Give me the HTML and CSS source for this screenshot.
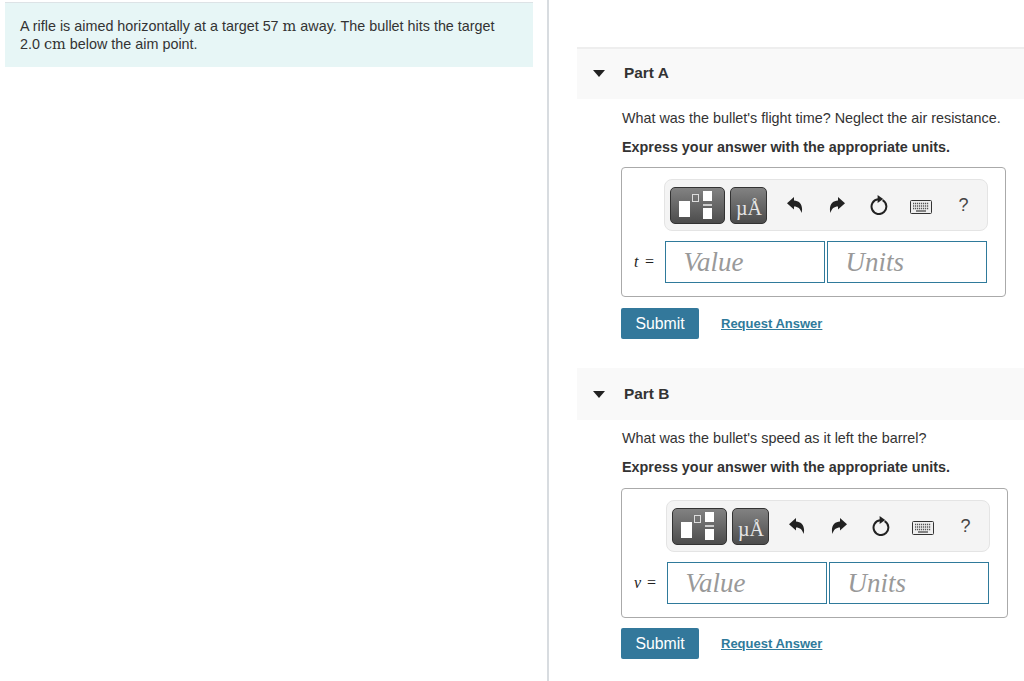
FILE: index.html
```html
<!DOCTYPE html>
<html lang="en">
<head>
    <meta charset="UTF-8">
    <meta name="viewport" content="width=device-width, initial-scale=1.0">
    <title>Projectile Problem</title>
    <link rel="stylesheet" href="styles.css">
</head>
<body>
    <svg class="defs" width="0" height="0">
        <symbol id="icon-undo" viewBox="0 0 16 16">
            <path d="M0 6.2 L7 0 V3.6 C12.5 3.8 16.5 8 14.6 16 C13.4 11.4 11 9.4 7 9.4 V12.6 Z"/>
        </symbol>
        <symbol id="icon-redo" viewBox="0 0 16 16">
            <path d="M16 6.2 L9 0 V3.6 C3.5 3.8 -0.5 8 1.4 16 C2.6 11.4 5 9.4 9 9.4 V12.6 Z"/>
        </symbol>
        <symbol id="icon-reset" viewBox="0 0 20 20">
            <path d="M13.6 5.2 A7.4 7.4 0 1 1 9 4.3" fill="none" stroke="#222" stroke-width="2"/>
            <path d="M8.6 0 L14.2 4 L8.6 8 Z"/>
        </symbol>
        <symbol id="icon-keyboard" viewBox="0 0 22 14">
            <rect x="0.5" y="0.5" width="21" height="13" rx="1" fill="#eee" stroke="#333"/>
            <path d="M3 3.5 H19 M3 6 H19 M3 8.5 H19" stroke="#555" stroke-width="1.4" stroke-dasharray="1.2 0.8"/>
            <path d="M6 11 H16" stroke="#555" stroke-width="1.4"/>
        </symbol>
    </svg>

    <div class="page">
        <div class="left-col">
            <div class="intro">
                A rifle is aimed horizontally at a target 57 <span class="math">m</span> away. The bullet hits the target<br>
                2.0 <span class="math">cm</span> below the aim point.
            </div>
        </div>

        <div class="right-col">
            <div class="part">
                <div class="part-header"><span class="arrow"></span><span class="part-title">Part A</span></div>
                <div class="part-body">
                    <p class="question">What was the bullet's flight time? Neglect the air resistance.</p>
                    <p class="hint">Express your answer with the appropriate units.</p>
                    <div class="answer-box">
                        <div class="toolbar">
                            <button class="tool tool-template">
                                <span class="sq sq-big"></span><span class="sq sq-small"></span>
                                <span class="frac"><span class="sq"></span><span class="bar"></span><span class="sq"></span></span>
                            </button>
                            <button class="tool tool-units">µÅ</button>
                            <span class="tool-icon"><svg width="16" height="16"><use href="#icon-undo"/></svg></span>
                            <span class="tool-icon"><svg width="16" height="16"><use href="#icon-redo"/></svg></span>
                            <span class="tool-icon"><svg width="20" height="20"><use href="#icon-reset"/></svg></span>
                            <span class="tool-icon"><svg class="icon-kb" width="22" height="14"><use href="#icon-keyboard"/></svg></span>
                            <span class="tool-icon help">?</span>
                        </div>
                        <div class="var-label"><i>t</i> =</div>
                        <div class="inputs">
                            <input type="text" placeholder="Value">
                            <input type="text" placeholder="Units">
                        </div>
                    </div>
                    <div class="actions">
                        <button class="submit">Submit</button>
                        <a class="request" href="#">Request Answer</a>
                    </div>
                </div>
            </div>

            <div class="part">
                <div class="part-header no-line"><span class="arrow"></span><span class="part-title">Part B</span></div>
                <div class="part-body">
                    <p class="question">What was the bullet's speed as it left the barrel?</p>
                    <p class="hint">Express your answer with the appropriate units.</p>
                    <div class="answer-box">
                        <div class="toolbar">
                            <button class="tool tool-template">
                                <span class="sq sq-big"></span><span class="sq sq-small"></span>
                                <span class="frac"><span class="sq"></span><span class="bar"></span><span class="sq"></span></span>
                            </button>
                            <button class="tool tool-units">µÅ</button>
                            <span class="tool-icon"><svg width="16" height="16"><use href="#icon-undo"/></svg></span>
                            <span class="tool-icon"><svg width="16" height="16"><use href="#icon-redo"/></svg></span>
                            <span class="tool-icon"><svg width="20" height="20"><use href="#icon-reset"/></svg></span>
                            <span class="tool-icon"><svg class="icon-kb" width="22" height="14"><use href="#icon-keyboard"/></svg></span>
                            <span class="tool-icon help">?</span>
                        </div>
                        <div class="var-label"><i>v</i> =</div>
                        <div class="inputs">
                            <input type="text" placeholder="Value">
                            <input type="text" placeholder="Units">
                        </div>
                    </div>
                    <div class="actions actions-last">
                        <button class="submit">Submit</button>
                        <a class="request" href="#">Request Answer</a>
                    </div>
                </div>
            </div>
        </div>
    </div>
</body>
</html>
```

FILE: styles.css
```css
html, body {
    margin: 0;
    padding: 0;
    height: 100%;
    overflow: hidden;
    background: #fff;
}
body {
    font-family: "Liberation Sans", Arial, sans-serif;
    font-size: 14.37px;
    color: #333;
}
.defs {
    position: absolute;
}
.page {
    display: flex;
    height: 681px;
}
.left-col {
    width: 549px;
    flex: none;
    box-sizing: border-box;
    padding: 2px 14px 0 5px;
    border-right: 2px solid #d8dce0;
}
.intro {
    background: #e7f6f6;
    border-top: 1px solid #dde3e6;
    padding: 14px 15px 14px;
    line-height: 18px;
}
.math {
    font-family: "DejaVu Serif", serif;
    font-size: 14.5px;
    line-height: 0;
}
.right-col {
    flex: 1;
    padding: 47px 0 0 28px;
}
.part-header {
    display: flex;
    align-items: center;
    height: 49px;
    padding-bottom: 1px;
    background: #f9f9f9;
    border-top: 2px solid #eee;
}
.part-header.no-line {
    border-top: 2px solid #f9f9f9;
}
.arrow {
    width: 0;
    height: 0;
    margin-left: 16px;
    border-left: 6.5px solid transparent;
    border-right: 6.5px solid transparent;
    border-top: 7px solid #222;
}
.part-title {
    margin-left: 19px;
    margin-top: -2px;
    font-size: 15.4px;
    font-weight: bold;
    color: #333;
}
.part-body {
    padding-left: 45px;
}
.question {
    margin: 0;
    padding-top: 10px;
    line-height: 18px;
}
.part + .part .question {
    padding-top: 9px;
}
.hint {
    margin: 11px 0 0;
    line-height: 18px;
    font-weight: bold;
}
.answer-box {
    display: inline-grid;
    grid-template-columns: auto auto;
    row-gap: 10px;
    margin: 11px 0 0 -1px;
    padding: 11px 17px 13px 12px;
    border: 1px solid #aaa;
    border-radius: 4px;
    vertical-align: top;
}
.part + .part .answer-box {
    margin-top: 12px;
}
.toolbar {
    grid-column: 2;
    display: flex;
    align-items: center;
    box-sizing: border-box;
    width: 324px;
    height: 52px;
    margin-left: -1px;
    padding-left: 5px;
    background: #f4f4f4;
    border: 1px solid #e4e4e4;
    border-radius: 8px;
}
.tool {
    position: relative;
    box-sizing: border-box;
    height: 37px;
    padding: 0;
    border: 1px solid #333;
    border-radius: 5px;
    background: linear-gradient(#828282, #4c4c4c);
}
.tool-template {
    width: 55px;
}
.tool-units {
    width: 37px;
    margin-left: 5px;
    margin-right: 7px;
    padding-top: 6px;
    font-family: "Liberation Serif", serif;
    font-size: 20px;
    color: #e6e6e6;
}
.sq {
    display: block;
    background: #fff;
    height: 11px;
}
.sq-big {
    position: absolute;
    left: 8px;
    top: 13px;
    width: 11px;
    height: 16px;
}
.sq-small {
    position: absolute;
    left: 21px;
    top: 6px;
    width: 5px;
    height: 6px;
    background: none;
    border: 1px solid #ddd;
}
.frac {
    position: absolute;
    left: 32px;
    top: 3px;
    width: 9px;
}
.frac .sq {
    width: 9px;
    height: 10px;
}
.frac .bar + .sq {
    height: 11px;
}
.bar {
    display: block;
    height: 2px;
    margin: 3px 0 2px;
    background: #ccc;
}
.tool-icon {
    width: 42px;
    flex: none;
    display: flex;
    justify-content: center;
    align-items: center;
    fill: #222;
}
.icon-kb {
    margin-top: 3px;
}
.help {
    font-size: 18px;
    color: #444;
}
.var-label {
    grid-column: 1;
    align-self: center;
    margin-right: 11.35px;
    font-family: "Liberation Serif", serif;
    font-size: 16px;
    word-spacing: 2px;
    color: #222;
}
.var-label i {
    display: inline-block;
    min-width: 5.1px;
}
.inputs {
    grid-column: 2;
    display: flex;
    gap: 2px;
}
.inputs input {
    box-sizing: border-box;
    width: 160px;
    height: 42px;
    padding: 0 17px;
    border: 1px solid #2f7a9b;
    border-radius: 0;
    outline: none;
    font-family: "Liberation Serif", serif;
    font-style: italic;
    font-size: 27px;
}
.inputs input::placeholder {
    color: #999;
    opacity: 1;
}
.actions {
    display: flex;
    align-items: center;
    margin: 11px 0 0 -1px;
    height: 31px;
}
.actions-last {
    margin-top: 10px;
}
.submit {
    width: 78px;
    height: 31px;
    padding: 0;
    border: none;
    border-radius: 2px;
    background: #33789b;
    color: #fff;
    font-family: "Liberation Sans", Arial, sans-serif;
    font-size: 15.8px;
}
.request {
    margin-left: 22px;
    color: #2f7a9b;
    font-size: 13px;
    font-weight: bold;
}
.part + .part {
    margin-top: 29px;
}
```
